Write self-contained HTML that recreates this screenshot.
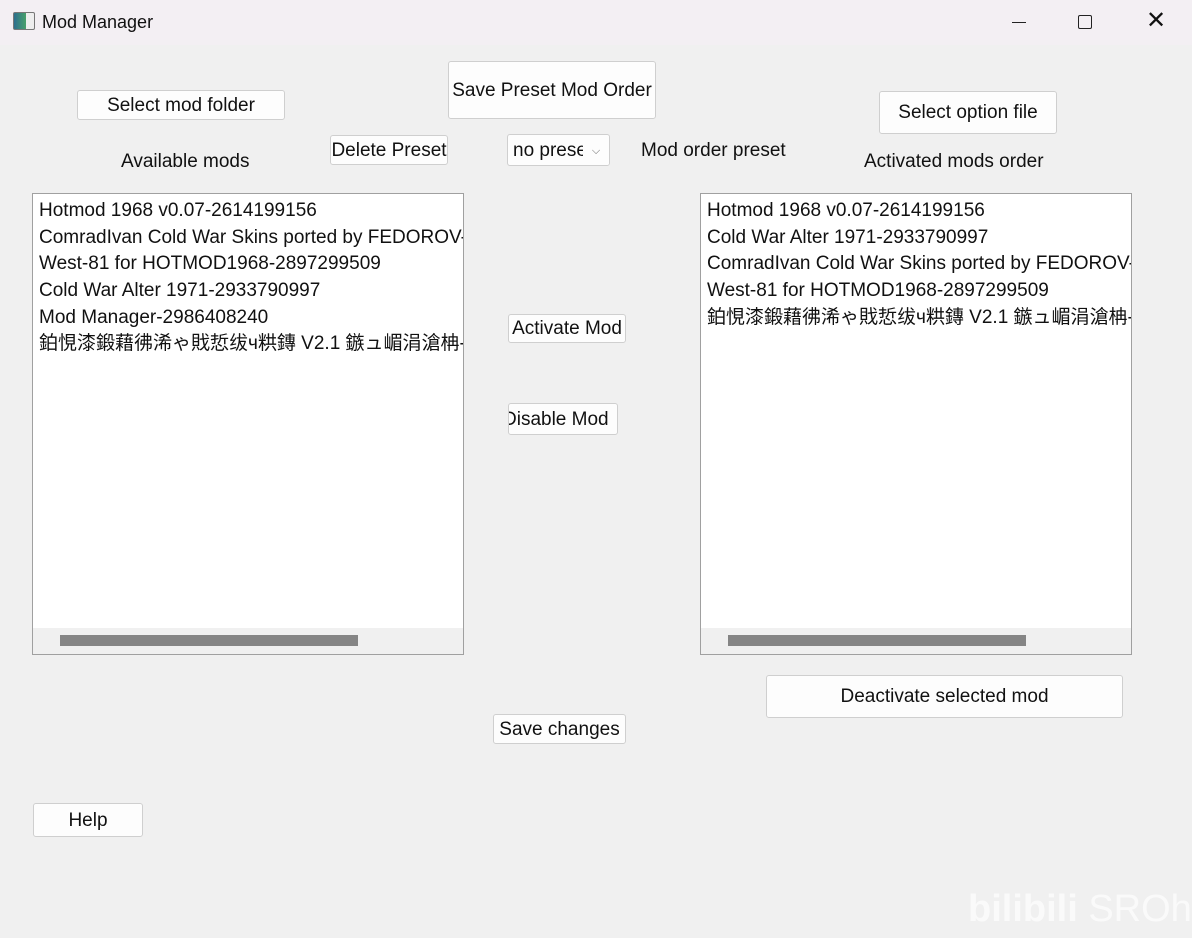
<!DOCTYPE html>
<html><head><meta charset="utf-8"><style>
*{box-sizing:border-box;margin:0;padding:0}
body{width:1192px;height:938px;overflow:hidden;background:#f0f0f0;font-family:"Liberation Sans","Noto Sans CJK SC",sans-serif;font-size:19px;color:#111;position:relative}
.t{position:absolute;left:0;top:0;width:1192px;height:45px;background:#f3eff3}
.a{position:absolute;white-space:nowrap}
.b{position:absolute;background:#fdfdfd;border:1px solid #cfcfcf;border-radius:3px;display:flex;align-items:center;justify-content:center;white-space:nowrap;overflow:hidden;padding-top:1px}
.lb{position:absolute;background:#fff;border:1px solid #a0a0a0;overflow:hidden}
.lb div.r{height:26.7px;line-height:26px;padding-left:6px;white-space:nowrap}
.sb{position:absolute;left:0;right:0;bottom:0;height:26px;background:#f0f0f0}
.th{position:absolute;top:7px;height:11px;background:#858585}
</style></head><body>
<div class="t"></div>
<div class="a" style="left:13px;top:12px;width:22px;height:18px;border:1px solid #777;border-radius:2px;background:linear-gradient(90deg,#2d6f8e 0,#48a06a 60%,#eee 60%)"></div>
<div class="a" style="left:42px;top:12px;font-size:18px">Mod Manager</div>
<div class="a" style="left:1012px;top:22px;width:14px;height:1px;background:#222"></div>
<div class="a" style="left:1078px;top:15px;width:14px;height:14px;border:1.5px solid #222;border-radius:2px"></div>
<div class="a" style="left:1146px;top:6px;font-size:24px;font-weight:300">✕</div>

<div class="b" style="left:77px;top:90px;width:208px;height:30px">Select mod folder</div>
<div class="b" style="left:448px;top:61px;width:208px;height:58px">Save Preset Mod Order</div>
<div class="b" style="left:879px;top:91px;width:178px;height:43px">Select option file</div>
<div class="b" style="left:330px;top:135px;width:118px;height:30px">Delete Preset</div>
<div class="b" style="left:507px;top:134px;width:103px;height:32px;justify-content:flex-start;padding-left:5px">no prese<span style="position:absolute;right:0;width:26px;height:30px;background:#fdfdfd;font-size:11px;color:#666;text-align:center;line-height:30px">⌵</span></div>
<div class="a" style="left:641px;top:140px">Mod order preset</div>
<div class="a" style="left:121px;top:151px">Available mods</div>
<div class="a" style="left:864px;top:151px">Activated mods order</div>

<div class="lb" style="left:32px;top:193px;width:432px;height:462px">
<div style="height:4px"></div>
<div class="r">Hotmod 1968 v0.07-2614199156</div>
<div class="r">ComradIvan Cold War Skins ported by FEDOROV-</div>
<div class="r">West-81 for HOTMOD1968-2897299509</div>
<div class="r">Cold War Alter 1971-2933790997</div>
<div class="r">Mod Manager-2986408240</div>
<div class="r">鉑悓漆鍛藉彿浠ゃ戝悊绂ч粠鏄 V2.1 鏃ュ嵋涓滄柟-31</div>
<div class="sb"><div class="th" style="left:27px;width:298px"></div></div>
</div>
<div class="lb" style="left:700px;top:193px;width:432px;height:462px">
<div style="height:4px"></div>
<div class="r">Hotmod 1968 v0.07-2614199156</div>
<div class="r">Cold War Alter 1971-2933790997</div>
<div class="r">ComradIvan Cold War Skins ported by FEDOROV-</div>
<div class="r">West-81 for HOTMOD1968-2897299509</div>
<div class="r">鉑悓漆鍛藉彿浠ゃ戝悊绂ч粠鏄 V2.1 鏃ュ嵋涓滄柟-31</div>
<div class="sb"><div class="th" style="left:27px;width:298px"></div></div>
</div>

<div class="b" style="left:508px;top:314px;width:118px;height:29px">Activate Mod</div>
<div class="b" style="left:508px;top:403px;width:110px;height:32px;justify-content:flex-start"><span style="margin-left:-6px">Disable Mod</span></div>
<div class="b" style="left:766px;top:675px;width:357px;height:43px">Deactivate selected mod</div>
<div class="b" style="left:493px;top:714px;width:133px;height:30px">Save changes</div>
<div class="b" style="left:33px;top:803px;width:110px;height:34px">Help</div>
<div class="a" style="left:968px;top:888px;font-size:38px;color:#fafafa;font-weight:bold">bilibili<span style="font-weight:normal"> SROhg</span></div>
</body></html>
